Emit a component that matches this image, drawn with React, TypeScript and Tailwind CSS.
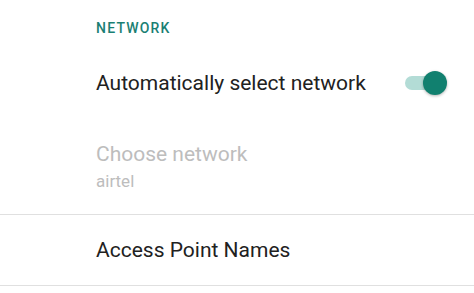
export default function App() {
  return (
    <div className="w-[474px] h-[293px] bg-white overflow-hidden font-['Roboto',sans-serif]">
      <div className="pt-[20px] pl-[96px] text-[14px] leading-[16px] font-medium tracking-[1.2px] text-[#1b7f73]">
        NETWORK
      </div>
      <div className="mt-[35px] h-[25px] flex items-start pl-[96px] pr-[27px]">
        <span className="text-[21px] leading-[25px] text-[#212121]">Automatically select network</span>
        <div className="ml-auto relative w-[42px] h-[24px]">
          <div className="absolute left-0 top-[5px] w-[36px] h-[14px] rounded-full bg-[#b3dcd6]" />
          <div className="absolute right-0 top-0 w-[24px] h-[24px] rounded-full bg-[#11806f] shadow-[0_1px_3px_rgba(0,0,0,0.3)]" />
        </div>
      </div>
      <div className="mt-[46px] pl-[96px] text-[21px] leading-[25px] text-[#bdbdbd]">Choose network</div>
      <div className="mt-[4px] pl-[96px] text-[17px] leading-[20px] text-[#bdbdbd]">airtel</div>
      <div className="mt-[23px] h-px bg-[#e0e0e0]" />
      <div className="mt-[23px] pl-[96px] text-[21px] leading-[25px] text-[#212121]">Access Point Names</div>
      <div className="mt-[22px] h-px bg-[#e0e0e0]" />
    </div>
  );
}
